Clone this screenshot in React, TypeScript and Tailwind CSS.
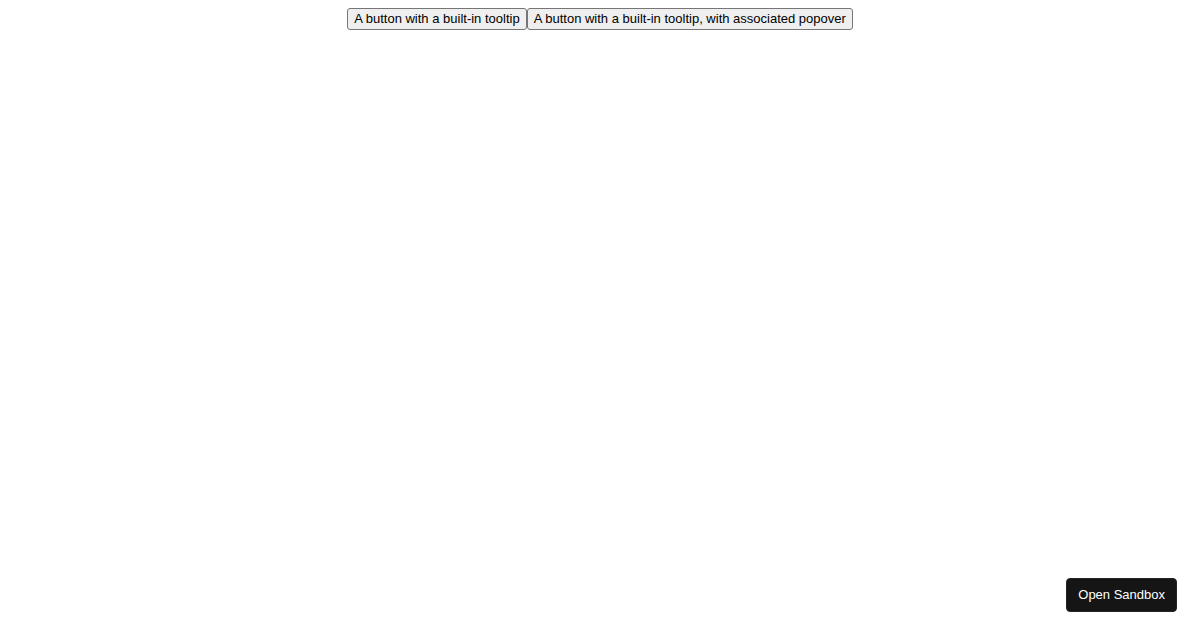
const demoButton =
  "rounded-[3px] border border-[#767676] bg-[#efefef] px-1.5 text-[13px] leading-5 text-black hover:bg-[#e5e5e5]";

export default function App() {
  return (
    <div className="flex min-h-screen flex-col justify-between bg-white font-['Liberation_Sans',Arial,sans-serif]">
      <main className="flex flex-wrap justify-center p-2">
        <button type="button" title="Tooltip" className={demoButton}>
          A button with a built-in tooltip
        </button>
        <button type="button" title="Tooltip" aria-haspopup="dialog" className={demoButton}>
          A button with a built-in tooltip, with associated popover
        </button>
      </main>
      <footer className="flex justify-end pr-[23px] pb-[18px]">
        <button
          type="button"
          className="rounded-[4px] border border-[#252525] bg-[#151515] px-[11px] text-[13px] leading-8 text-white hover:bg-[#252525]"
        >
          Open Sandbox
        </button>
      </footer>
    </div>
  );
}
